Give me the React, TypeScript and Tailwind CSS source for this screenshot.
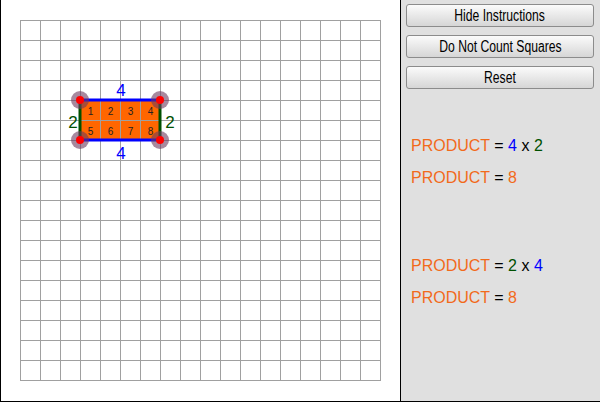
import React from "react"

const CELL = 20
const lines = Array.from({ length: 19 }, (_, i) => 20 + i * CELL)
const corners = [
  [80, 100],
  [160, 100],
  [80, 140],
  [160, 140],
]

function GridBoard() {
  return (
    <svg width={399} height={401} className="block">
      <g transform="translate(-1 0)">
        <rect x={80} y={100} width={80} height={40} fill="#ff6600" />
        {lines.map((p) => (
          <g key={p} stroke="#a0a0a0" strokeWidth={1} shapeRendering="crispEdges">
            <line x1={p + 0.5} y1={20} x2={p + 0.5} y2={381} />
            <line x1={20} y1={p + 0.5} x2={381} y2={p + 0.5} />
          </g>
        ))}
        {[1, 2, 3, 4, 5, 6, 7, 8].map((n, i) => (
          <text
            key={n}
            x={90 + (i % 4) * CELL + 0.5}
            y={115 + Math.floor(i / 4) * CELL}
            fontSize={10}
            textAnchor="middle"
            fill="#222"
            fontFamily="'Liberation Sans', Arial, sans-serif"
          >
            {n}
          </text>
        ))}
        <line x1={80} y1={100} x2={160} y2={100} stroke="#0000ff" strokeWidth={3} />
        <line x1={80} y1={140} x2={160} y2={140} stroke="#0000ff" strokeWidth={3} />
        <line x1={80} y1={100} x2={80} y2={140} stroke="#005000" strokeWidth={3} />
        <line x1={160} y1={100} x2={160} y2={140} stroke="#005000" strokeWidth={3} />
        {corners.map(([x, y]) => (
          <g key={`${x}-${y}`}>
            <circle cx={x} cy={y} r={9} fill="#6e3a5e" fillOpacity={0.6} />
            <circle cx={x} cy={y} r={4} fill="#ff0000" />
          </g>
        ))}
        <g fontSize={17} fontFamily="'Liberation Sans', Arial, sans-serif" textAnchor="middle">
          <text x={121} y={96} fill="#0000ff">4</text>
          <text x={121} y={159} fill="#0000ff">4</text>
          <text x={73} y={128} fill="#005000">2</text>
          <text x={170} y={128} fill="#005000">2</text>
        </g>
      </g>
    </svg>
  )
}

function PanelButton({ label }: { label: string }) {
  return (
    <button className="flex h-[23px] w-full items-center justify-center rounded-[3px] border border-[#8c8c8c] bg-gradient-to-b from-[#fbfbfb] to-[#d6d6d6] text-black">
      <span className="inline-block scale-x-[0.76] whitespace-nowrap text-[16px] leading-none">{label}</span>
    </button>
  )
}

function Product({ a, b }: { a?: [string, string]; b?: [string, string] }) {
  return (
    <div className="h-[20px] text-[16px] leading-[20px] text-black">
      <span className="text-[#f26a1b]">PRODUCT</span> ={" "}
      {a && b ? (
        <>
          <span className={a[1]}>{a[0]}</span> x <span className={b[1]}>{b[0]}</span>
        </>
      ) : (
        <span className="text-[#f26a1b]">8</span>
      )}
    </div>
  )
}

export default function App() {
  return (
    <div className="flex h-[402px] w-[600px] border-b border-l border-black bg-white [font-family:'Liberation_Sans',Arial,sans-serif]">
      <div className="w-[400px] border-r border-black">
        <GridBoard />
      </div>
      <div className="flex flex-1 flex-col bg-[#e0e0e0]">
        <div className="flex flex-col gap-[8px] px-[5px] pt-[4px] pr-[6px]">
          <PanelButton label="Hide Instructions" />
          <PanelButton label="Do Not Count Squares" />
          <PanelButton label="Reset" />
        </div>
        <div className="mt-[47px] flex flex-col gap-[12px] pl-[10px]">
          <Product a={["4", "text-[#0000ff]"]} b={["2", "text-[#005000]"]} />
          <Product />
        </div>
        <div className="mt-[68px] flex flex-col gap-[12px] pl-[10px]">
          <Product a={["2", "text-[#005000]"]} b={["4", "text-[#0000ff]"]} />
          <Product />
        </div>
      </div>
    </div>
  )
}
